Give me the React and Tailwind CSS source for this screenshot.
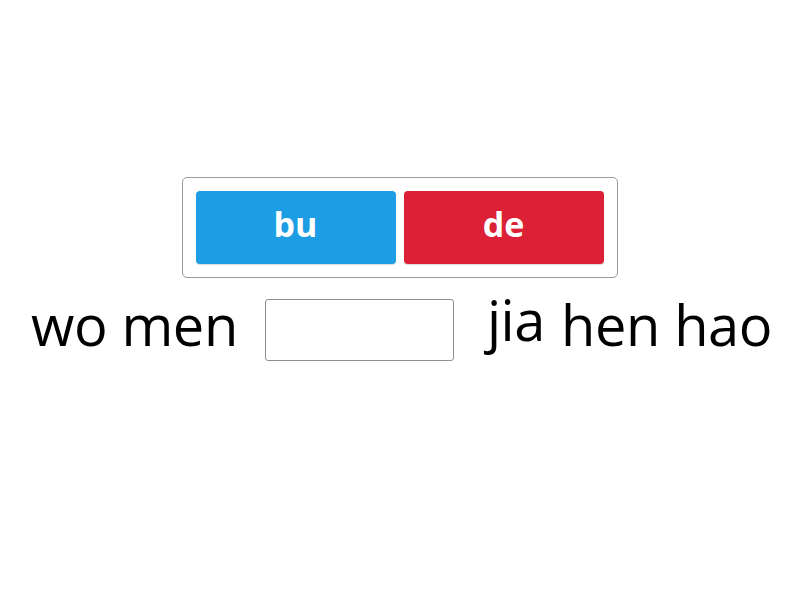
export default function App() {
  return (
    <div className="w-[800px] h-[600px] bg-white relative overflow-hidden" style={{ fontFamily: '"Open Sans", sans-serif' }}>
      <div className="flex flex-col items-center pt-[177px]">
        <div className="ml-[-1px] w-[436px] h-[101px] border border-[#9a9a9a] rounded-[5px] flex items-start gap-[8px] pl-[13px] pt-[13px]">
          <div className="w-[200px] h-[73px] rounded-[4px] bg-[#1d9de3] flex items-center justify-center pb-[6px] text-white font-bold text-[34px] shadow-[0_1px_1px_rgba(0,0,0,0.15)]">bu</div>
          <div className="w-[200px] h-[73px] rounded-[4px] bg-[#dc2036] flex items-center justify-center pb-[6px] text-white font-bold text-[34px] shadow-[0_1px_1px_rgba(0,0,0,0.15)]">de</div>
        </div>
      </div>
      <div className="flex items-start mt-[21px] pl-[31px] text-[56px] text-black leading-none tracking-[-0.4px]">
        <span className="mt-[-3px]">wo men</span>
        <div className="ml-[27px] w-[189px] h-[62px] border border-[#8f8f8f] rounded-[3px] bg-white"></div>
        <span className="ml-[33px] mt-[-8px]">jia</span>
        <span className="ml-[16px] mt-[-3px]">hen hao</span>
      </div>
    </div>
  );
}
